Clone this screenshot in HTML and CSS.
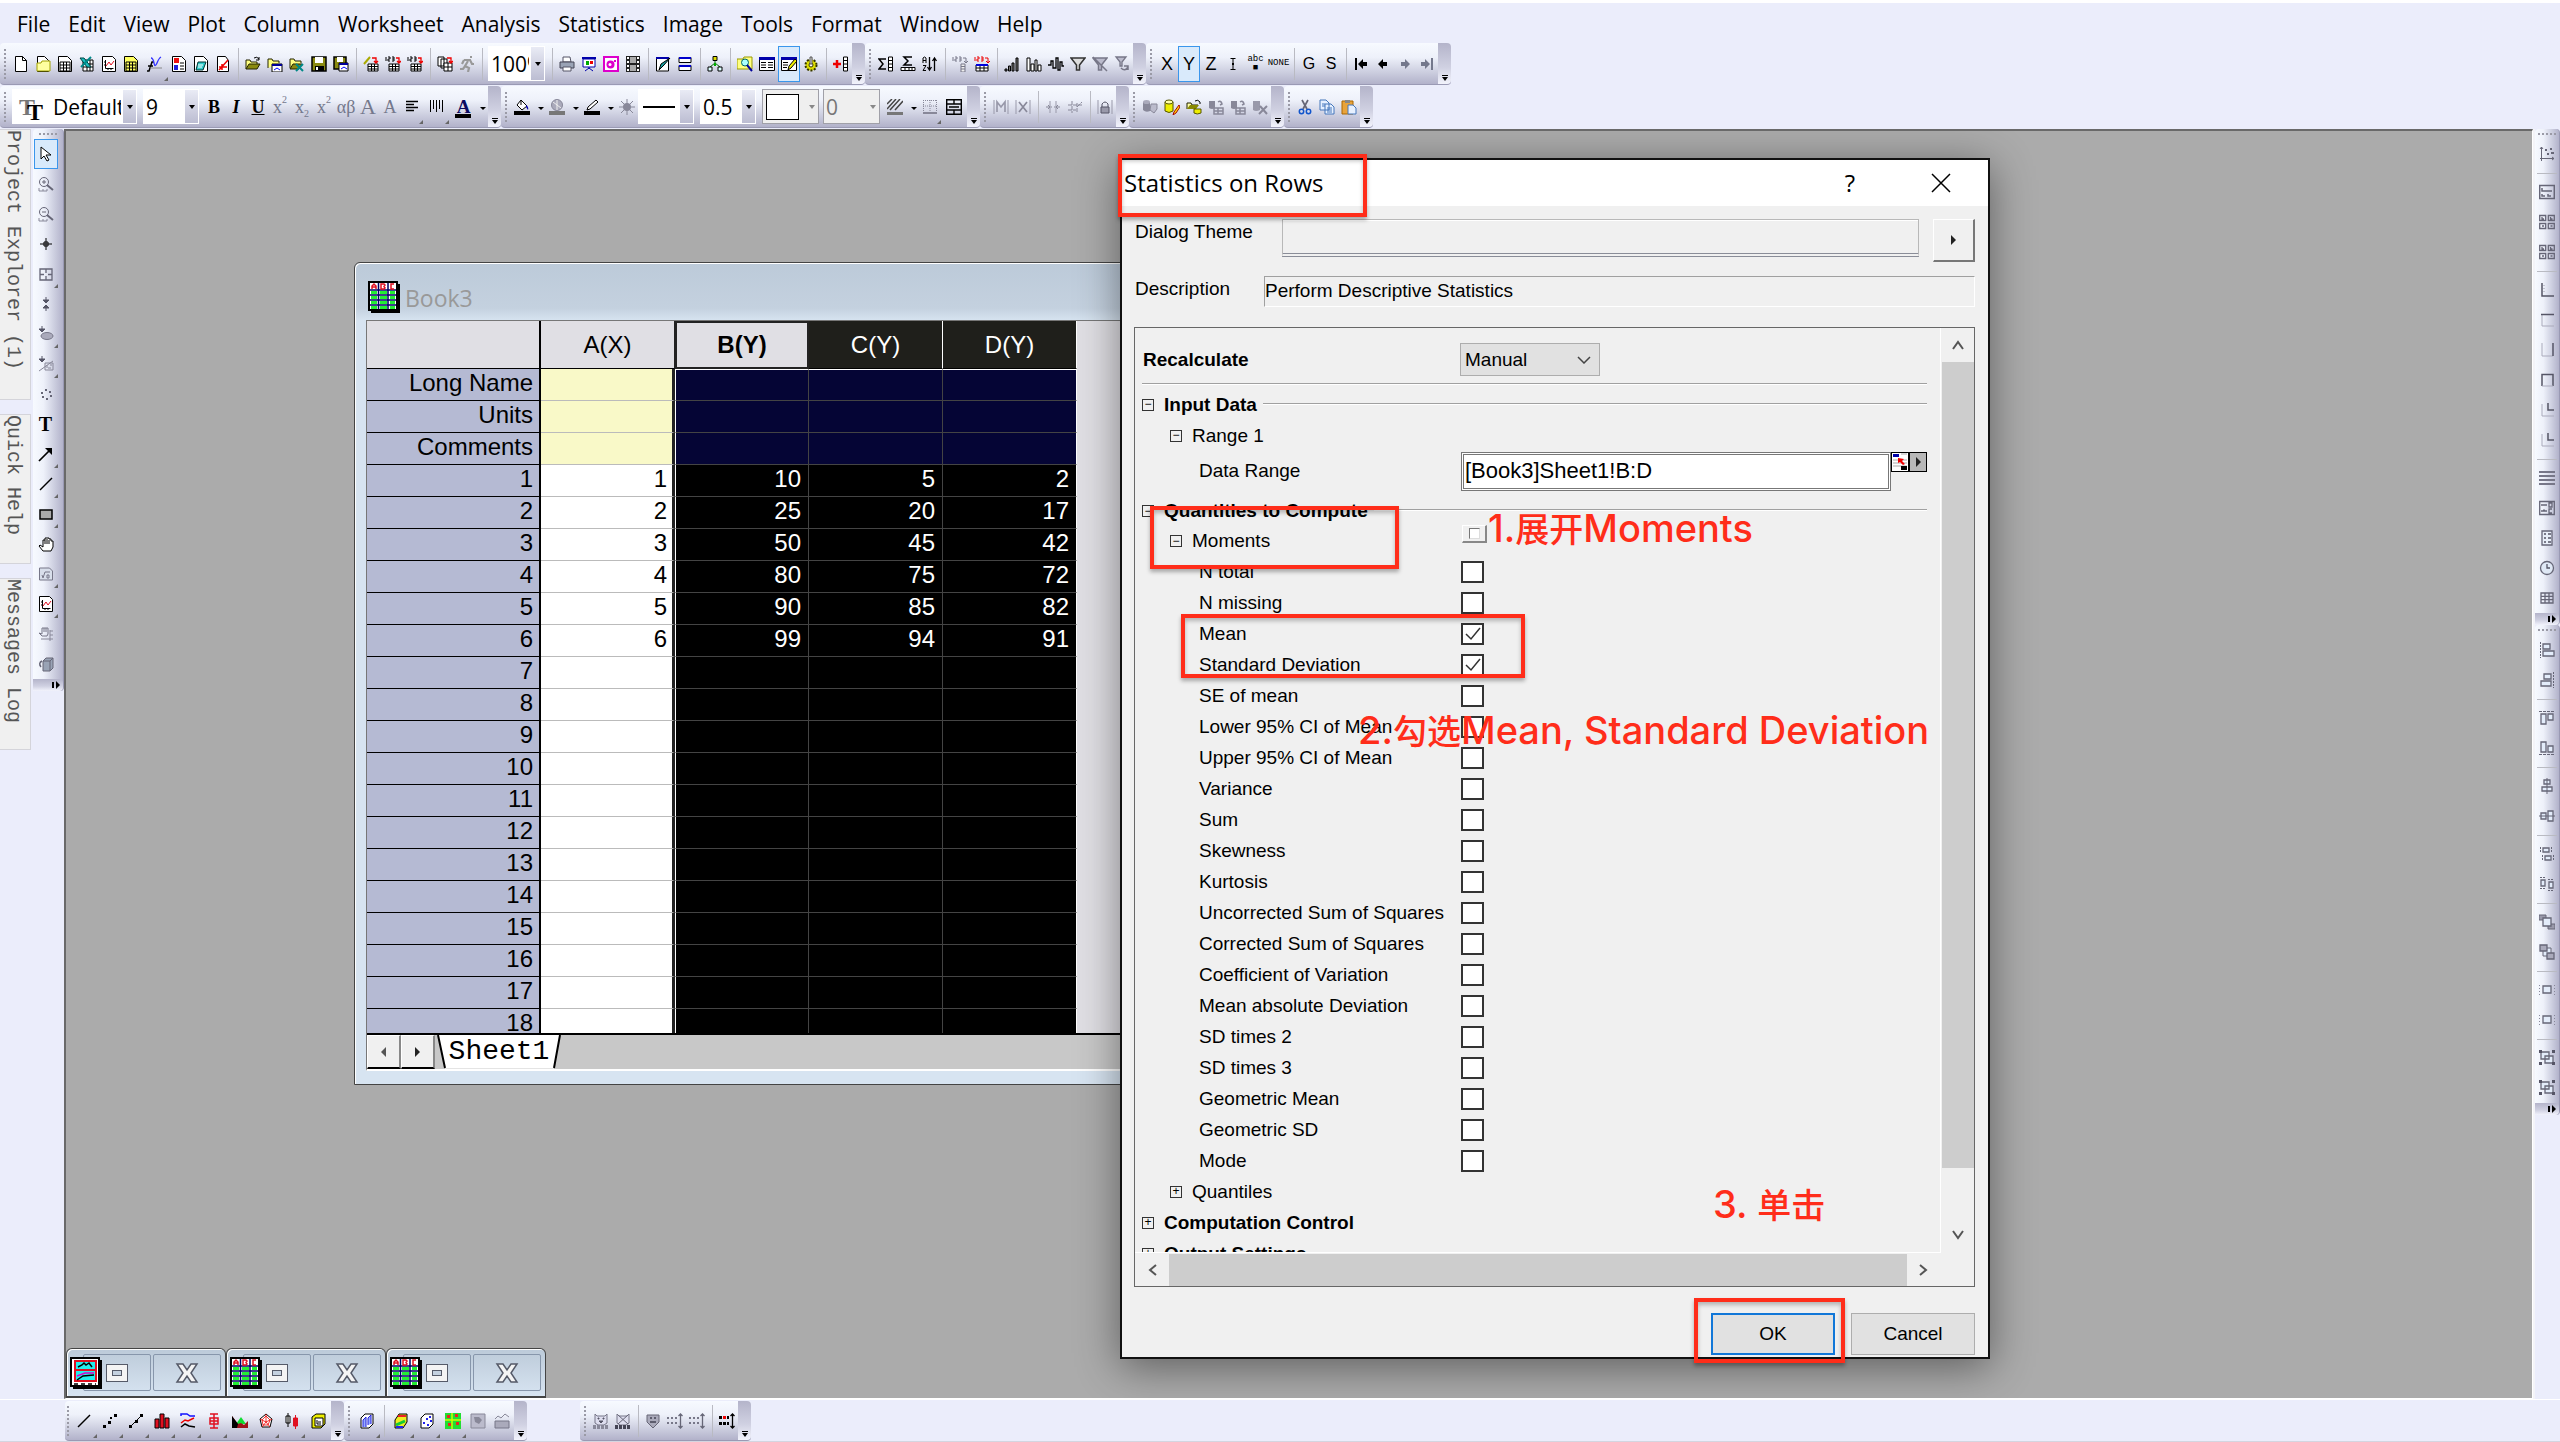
FILE: index.html
```html
<!DOCTYPE html>
<html lang="en">
<head>
<meta charset="utf-8">
<title>Origin - Statistics on Rows</title>
<link rel="stylesheet" href="styles.css">
</head>
<body>
<svg class="sprite" aria-hidden="true">
<defs>
<symbol id="doc" viewBox="0 0 16 16"><path d="M2.500 .5h7l4 4v11h-11z" fill="#fff" stroke="#000"/><path d="M9.500 .5v4h4" fill="none" stroke="#000"/></symbol>
<symbol id="docy" viewBox="0 0 16 16"><path d="M2.500 .5h7l4 4v11h-11z" fill="#fff" stroke="#000"/><path d="M2 7h4l1-2h8v10H2z" fill="#ffffa0" stroke="#a0a000"/></symbol>
<symbol id="docg" viewBox="0 0 16 16"><path d="M1.500 .5h9l4 4v11h-13z" fill="#fff" stroke="#000"/><path d="M3 6h10v9H3zM3 9h10M3 12h10M6.500 6v9M9.500 6v9" fill="none" stroke="#000"/></symbol>
<symbol id="docgy" viewBox="0 0 16 16"><path d="M1.500 .5h9l4 4v11h-13z" fill="#ffff60" stroke="#000"/><path d="M3 6h10v9H3zM3 9h10M3 12h10M6.500 6v9M9.500 6v9" fill="none" stroke="#000"/></symbol>
<symbol id="docx" viewBox="0 0 16 16"><path d="M4 4h10v11H4zM4 8h10M4 11h10M8 4v11M11 4v11" fill="#fff" stroke="#000"/><path d="M1 2h4l7 9H8z" fill="#19c0c0" stroke="#044"/><path d="M12 1L2 11" stroke="#088" stroke-width="2"/></symbol>
<symbol id="docc" viewBox="0 0 16 16"><path d="M1.500 .5h10l3 3v12h-13z" fill="#fff" stroke="#000"/><path d="M4.500 4v8.500h8M3 6h1M3 9h1M7 13v1M10 13v1" fill="none" stroke="#000"/><path d="M5 10l3-4 2 3 3-4" fill="none" stroke="#e01020"/></symbol>
<symbol id="fn" viewBox="0 0 16 16"><path d="M0 15h2l3-9h2M1 10h5" fill="none" stroke="#000" stroke-width="1.500"/><path d="M4 2q2 0 3 5t3 0 4-6" fill="none" stroke="#33f" stroke-width="1.300"/><path d="M3 12h12" stroke="#888"/></symbol>
<symbol id="doci" viewBox="0 0 16 16"><path d="M1.500 .5h9l4 4v11h-13z" fill="#fff" stroke="#000"/><path d="M3 2h5v5H3z" fill="#e11"/><path d="M3 9h4v5H3z" fill="#22d"/><path d="M9 7h4M9 10h4M9 13h4" stroke="#000"/></symbol>
<symbol id="docn" viewBox="0 0 16 16"><path d="M1.500 .5h9l4 4v11h-13z" fill="#fff" stroke="#000"/><path d="M5 6h8l-3 8H3z" fill="#3cc" stroke="#033"/><path d="M5 9h5M5 11h4" stroke="#fff"/></symbol>
<symbol id="docr" viewBox="0 0 16 16"><path d="M2.500 .5h8l3 4v11h-11z" fill="#fff" stroke="#000"/><path d="M4 14l9-10M7 8v6M4 11h8" stroke="#e00" stroke-width="1.500"/></symbol>
<symbol id="open" viewBox="0 0 16 16"><path d="M1 13V4h4l1 2h6v2" fill="#ffff80" stroke="#220"/><path d="M1 13l3-5h11l-3 5z" fill="#8a8a10" stroke="#220"/><path d="M9 2q3-2 5 1m0-2v3h-3" fill="none" stroke="#000"/></symbol>
<symbol id="openg" viewBox="0 0 16 16"><path d="M1 12V3h4l1 2h6v2" fill="#ffff80" stroke="#220"/><path d="M5 8h10v8H5z" fill="#fff" stroke="#000"/><path d="M5 8h10v2H5z" fill="#009"/><path d="M7 14l3-2 3 2" stroke="#00f" fill="none"/></symbol>
<symbol id="openx" viewBox="0 0 16 16"><path d="M1 12V3h4l1 2h6v2" fill="#ffff80" stroke="#220"/><path d="M1 13l3-5h9l-3 5z" fill="#8a8a10" stroke="#220"/><path d="M7 8l7 7M14 8l-7 7" stroke="#088" stroke-width="2"/></symbol>
<symbol id="save" viewBox="0 0 16 16"><path d="M1 1h14v14H1z" fill="#8a8a10" stroke="#000" stroke-width="1.500"/><path d="M4 1h8v6H4z" fill="#fff"/><path d="M4 10h9v5H4z" fill="#000"/><path d="M5 11h2v3H5z" fill="#fff"/></symbol>
<symbol id="saveg" viewBox="0 0 16 16"><path d="M1 1h12v12H1z" fill="#8a8a10" stroke="#000" stroke-width="1.500"/><path d="M4 1h6v5H4z" fill="#fff"/><path d="M6 7h9v8H6z" fill="#fff" stroke="#000"/><path d="M6 7h9v2H6z" fill="#009"/><path d="M8 13l3-2 3 2" stroke="#00f" fill="none"/></symbol>
<symbol id="imp" viewBox="0 0 16 16"><path d="M5 8h10v7H5zM5 10.500h10M5 13h10M8.500 8v7M11.500 8v7" fill="#fff" stroke="#000"/><path d="M1 8L7 1" stroke="#aa0" stroke-width="2"/><path d="M9 2h4v4m-2-1l2 2 2-2" fill="none" stroke="#e00" stroke-width="1.300"/></symbol>
<symbol id="imp1" viewBox="0 0 16 16"><path d="M4 8h10v7H4zM4 10.500h10M4 13h10M7.500 8v7M10.500 8v7" fill="#fff" stroke="#000"/><path d="M1 1v4M3 1h2v2H3v2h2M7 1h2v4H7M7 3h2" fill="none" stroke="#000"/><path d="M11 2h3v4m-2-1l2 2 2-2" fill="none" stroke="#e00" stroke-width="1.300"/></symbol>
<symbol id="dup" viewBox="0 0 16 16"><path d="M1 1h6v9H1zM4 3h6v9H4z" fill="#fff" stroke="#000"/><path d="M7 7h8v8H7zM7 11h8M11 7v8" fill="#fff" stroke="#000"/><path d="M10 2h4v4m-2-1l2 2 2-2" fill="none" stroke="#e00" stroke-width="1.300"/></symbol>
<symbol id="run" viewBox="0 0 16 16"><path d="M11 1h2M5 4h6l2 4h2M9 5l-3 5 4 2-1 4M7 9l-3 4H1M5 4L3 8" fill="none" stroke="#999" stroke-width="2.200"/></symbol>
<symbol id="print" viewBox="0 0 16 16"><path d="M4 1h7l1 5H4z" fill="#fff" stroke="#556"/><path d="M1 6h14v6H1z" fill="#9aa3b5" stroke="#445"/><path d="M4 11h8v4H4z" fill="#fff" stroke="#556"/></symbol>
<symbol id="pres" viewBox="0 0 16 16"><path d="M1 1h14v2H1z" fill="#00a"/><path d="M2 3h12v8H2z" fill="#fff" stroke="#00a"/><path d="M5 5h3v4H5z" fill="#0a0"/><path d="M9 5h3v3H9z" fill="#e00"/><path d="M8 11v2m-4 2l4-3 4 3" stroke="#00a" fill="none"/></symbol>
<symbol id="cam" viewBox="0 0 16 16"><path d="M1 1h14v14H1z" fill="#fff" stroke="#d0c" stroke-width="2"/><circle cx="7.500" cy="8.500" r="4" fill="#d0c"/><circle cx="7" cy="8.500" r="1.500" fill="#fff"/><path d="M11 4h2v2h-2z" fill="#d0c"/></symbol>
<symbol id="film" viewBox="0 0 16 16"><path d="M1 0h14v16H1z" fill="#222"/><path d="M5 1h6v6H5zM5 9h6v6H5z" fill="#aaa"/><path d="M2 1h2v2H2zM2 5h2v2H2zM2 9h2v2H2zM2 13h2v2H2zM12 1h2v2h-2zM12 5h2v2h-2zM12 9h2v2h-2zM12 13h2v2h-2z" fill="#fff"/></symbol>
<symbol id="brush" viewBox="0 0 16 16"><path d="M1.500 2h12v13h-12z" fill="#fff" stroke="#000"/><path d="M1 1h13v2H1z" fill="#00a"/><path d="M15 2L9 9l-5 5 2-6z" fill="#19a0a0" stroke="#000"/></symbol>
<symbol id="split" viewBox="0 0 16 16"><path d="M2 1.500h12v5H2zM2 9.500h12v5H2z" fill="#fff" stroke="#000"/><path d="M2 1h12v2H2zM2 9h12v2H2z" fill="#00c"/></symbol>
<symbol id="tree" viewBox="0 0 16 16"><path d="M8 4v3M8 7l-5 4M8 7l5 4" stroke="#070"/><path d="M6 .5h4v4H6z" fill="#dd0" stroke="#000"/><path d="M1 11h4v4H1zM11 11h4v4h-4z" fill="#dff" stroke="#000"/><path d="M7 7h2v3H7z" fill="#0a0"/></symbol>
<symbol id="find" viewBox="0 0 16 16"><path d="M0 3h6l1-2h8v12H0z" fill="#ffff80" stroke="#990"/><circle cx="8" cy="6.500" r="3.500" fill="#aff" stroke="#066"/><path d="M10 9l5 6" stroke="#009" stroke-width="2"/></symbol>
<symbol id="list" viewBox="0 0 16 16"><path d="M.5 1.500h15v13H.5z" fill="#fff" stroke="#000"/><path d="M0 1h16v3H0z" fill="#00a"/><path d="M2 6.500h5M9 6.500h5M2 9h5M9 9h5M2 11.500h5M9 11.500h5" stroke="#000"/></symbol>
<symbol id="editl" viewBox="0 0 16 16"><path d="M.5 1.500h15v13H.5z" fill="#fff" stroke="#000"/><path d="M0 1h16v3H0z" fill="#00a"/><path d="M2 6.500h5M2 9h5M2 11.500h4" stroke="#000"/><path d="M14 3l-6 7-1 4 3-2 6-7z" fill="#ee0" stroke="#000"/></symbol>
<symbol id="gear" viewBox="0 0 16 16"><circle cx="8" cy="9" r="5.500" fill="#dd0" stroke="#330" stroke-width="2" stroke-dasharray="2 1.500"/><circle cx="8" cy="9" r="2" fill="#fff" stroke="#330"/><path d="M7 1h2v7H7z" fill="#ddd" stroke="#555"/></symbol>
<symbol id="addcol" viewBox="0 0 16 16"><path d="M0 8h8M4 4v8" stroke="#e00" stroke-width="2.500"/><path d="M10.500 1h4v14h-4zM10 4.500h4M10 8h4M10 11.500h4" fill="#fff" stroke="#000"/></symbol>
<symbol id="sumc" viewBox="0 0 16 16"><path d="M8 3H1l4 5-4 5h7" fill="none" stroke="currentColor" stroke-width="1.500"/><path d="M10.500 1h4v14h-4zM10 4.500h4M10 8h4M10 11.500h4" fill="#fff" stroke="currentColor"/></symbol>
<symbol id="sumr" viewBox="0 0 16 16"><path d="M12 1H4l4 4-4 4h8" fill="none" stroke="currentColor" stroke-width="1.500"/><path d="M1 11.500h14v3H1zM5 11v4M9 11v4M12 11v4" fill="#fff" stroke="currentColor"/></symbol>
<symbol id="sort" viewBox="0 0 16 16"><path d="M1 7V2l1.500-1L4 2v5M1 4.500h3M1 9.500h3l-3 5h3" fill="none" stroke="currentColor"/><path d="M7.500 1v13m-2-3l2 3 2-3M12.500 15V2m-2 3l2-3 2 3" fill="none" stroke="currentColor" stroke-width="1.300"/></symbol>
<symbol id="n123" viewBox="0 0 16 16"><path d="M1 1v4M3 1h2v2H3v2h2M7 1h2v4H7M7 3h2M11 2h3v4m-2-1l2 2 2-2" fill="none" stroke="#778"/><path d="M9 8h4v8H9zM9 10.500h4M9 13h4" fill="#eee" stroke="#778"/></symbol>
<symbol id="t123" viewBox="0 0 16 16"><path d="M1 1v4M3 1h2v2H3v2h2M7 1h2v4H7M7 3h2M11 2h3v4m-2-1l2 2 2-2" fill="none" stroke="#e00"/><path d="M2 9h12v6H2zM2 12h12M6 9v6M10 9v6" fill="#fff" stroke="#000"/><path d="M2 8h12v2H2z" fill="#00d"/></symbol>
<symbol id="b1" viewBox="0 0 16 16"><path d="M1 13h2v2H1zM4.500 10h2v5h-2zM8 7h2v8H8zM12 2h2v13h-2z" fill="#777" stroke="currentColor"/></symbol>
<symbol id="b2" viewBox="0 0 16 16"><path d="M1 2h3v13H1zM5 8h3v7H5zM9 4h2v11H9zM12 9h3v6h-3z" fill="#fff" stroke="currentColor"/></symbol>
<symbol id="b3" viewBox="0 0 16 16"><path d="M0 9h3v-4h2v7h3V2h2v12h2V6h2v4h2" fill="none" stroke="currentColor" stroke-width="1.300"/></symbol>
<symbol id="filt" viewBox="0 0 16 16"><path d="M1 2h14L9.500 9v5h-3V9z" fill="#ddd" stroke="#333" stroke-width="1.500"/></symbol>
<symbol id="filtx" viewBox="0 0 16 16"><path d="M1 2h14L9.500 9v5h-3V9zM1 1l14 14" fill="#bbc" stroke="#778" stroke-width="1.500"/></symbol>
<symbol id="filtr" viewBox="0 0 16 16"><path d="M2 1h10L8 6v4H6V6z" fill="#bbc" stroke="#778" stroke-width="1.300"/><path d="M7 12q4 4 7-1m0 3v-4h-4" fill="none" stroke="#778" stroke-width="1.500"/></symbol>
<symbol id="ibeam" viewBox="0 0 16 16"><path d="M5.500 2.500h5M8 2v11M5.500 13.500h5" stroke="#000"/><path d="M7 7h2v2H7z"/></symbol>
<symbol id="first" viewBox="0 0 16 16"><path d="M2 2h2v12H2zM5 8l5-5v3h4v4h-4v3z" fill="currentColor"/></symbol>
<symbol id="prev" viewBox="0 0 16 16"><path d="M3 8l5-5v3h4v4H8v3z" fill="currentColor"/></symbol>
<symbol id="next" viewBox="0 0 16 16"><path d="M13 8L8 3v3H4v4h4v3z" fill="currentColor"/></symbol>
<symbol id="last" viewBox="0 0 16 16"><path d="M12 2h2v12h-2zM11 8L6 3v3H2v4h4v3z" fill="currentColor"/></symbol>
<symbol id="al" viewBox="0 0 16 16"><path d="M2 2.500h12M2 5.500h8M2 8.500h12M2 11.500h8" stroke="#000" stroke-width="1.300"/></symbol>
<symbol id="vl" viewBox="0 0 16 16"><path d="M2.500 1v12M5.500 1v9M8.500 1v12M11.500 1v9M14.500 1v12" stroke="#000"/></symbol>
<symbol id="bucket" viewBox="0 0 16 16"><path d="M7 1l6 6-5 4-5-5zM7 1v5" fill="#fff" stroke="#000"/><path d="M12 6q3 2 2 5l-2-3z" fill="#00a"/><path d="M0 12h16v4H0z" fill="#000"/></symbol>
<symbol id="pal" viewBox="0 0 16 16"><circle cx="8" cy="6" r="5.500" fill="#aab" stroke="#889"/><path d="M4 3l8 6M8 1v10" stroke="#eee"/><path d="M0 12h16v4H0z" fill="#777"/></symbol>
<symbol id="pen" viewBox="0 0 16 16"><path d="M12 1l2 2-8 7-3 1 1-3z" fill="#fff" stroke="#000"/><path d="M0 12h16v4H0z" fill="#000"/></symbol>
<symbol id="bulb" viewBox="0 0 16 16"><circle cx="8" cy="8" r="4" fill="#889"/><path d="M8 0v16M0 8h16M2 2l12 12M14 2L2 14" stroke="#889"/></symbol>
<symbol id="hatch" viewBox="0 0 16 16"><path d="M0 10L9 0M3 11L13 0M8 11l8-9M0 5l5-5" stroke="#444" stroke-width="1.500"/><path d="M0 13h16v3H0z" fill="#777"/></symbol>
<symbol id="dots" viewBox="0 0 16 16"><path d="M1.500 1v11M8 1v11M14.500 1v11M1 1.500h14M1 7h14" stroke="#889" stroke-dasharray="1 1"/><path d="M1 14h14" stroke="#889" stroke-width="2"/></symbol>
<symbol id="cellb" viewBox="0 0 16 16"><path d="M.7 .7h14.600v14.600H.7zM.7 5h14.600M.7 11h14.600M8 1v4M8 11v4M3 8h10" fill="none" stroke="#000" stroke-width="1.400"/></symbol>
<symbol id="mm" viewBox="0 0 16 16"><path d="M1 1v14M15 1v14" stroke="#99a"/><path d="M4 13V3l4 5 4-5v10" fill="none" stroke="#99a" stroke-width="1.700"/></symbol>
<symbol id="mx" viewBox="0 0 16 16"><path d="M1 1v14M15 1v14" stroke="#99a"/><path d="M4 3l8 10M12 3L4 13" fill="none" stroke="#889" stroke-width="1.700"/></symbol>
<symbol id="pm" viewBox="0 0 16 16"><path d="M5 2v12M11 2v12" stroke="#99a" stroke-dasharray="5 2"/><path d="M1 8h6M9 8h6M3 6l2 2-2 2M13 6l-2 2 2 2" fill="none" stroke="#889"/></symbol>
<symbol id="pm3" viewBox="0 0 16 16"><path d="M5 2v12M10 4v10M1 6h14M1 11h8M10 8l5-5" stroke="#889" stroke-dasharray="4 1"/></symbol>
<symbol id="lock" viewBox="0 0 16 16"><path d="M1 1v14M15 1v14" stroke="#99a"/><path d="M5 8V5q3-4 6 0v3" fill="none" stroke="#556"/><path d="M4 8h8v6H4z" fill="#99a" stroke="#556"/></symbol>
<symbol id="db" viewBox="0 0 16 16"><path d="M1 3v8q3 3 7 1V3z" fill="#889"/><ellipse cx="4.500" cy="3" rx="3.500" ry="2" fill="#aab"/><path d="M9 5h6v5l-3 4-4-3z" fill="#bbc" stroke="#889"/></symbol>
<symbol id="dby" viewBox="0 0 16 16"><path d="M1 3v9q4 3 8 0V3z" fill="#ee0" stroke="#550"/><ellipse cx="5" cy="3" rx="4" ry="2" fill="#ffa" stroke="#550"/><path d="M15 6l-5 7-1 3 3-2 4-6z" fill="#fd0" stroke="#a00"/></symbol>
<symbol id="dbo" viewBox="0 0 16 16"><path d="M1 10V4h4l1 2h6" fill="#ffa" stroke="#220"/><path d="M1 10l3-4h9l-3 4z" fill="#880"/><path d="M8 10v4q3 2 7 0v-4z" fill="#ee0" stroke="#550"/><path d="M9 2q3-2 5 1v2" fill="none" stroke="#000"/></symbol>
<symbol id="dbg" viewBox="0 0 16 16"><path d="M1 2v7q3 2 6 0V2z" fill="#889"/><path d="M10 3q3-2 4 2l-2 1M6 9h9v6H6zM6 12h9M10 9v6" fill="none" stroke="#889" stroke-width="1.500"/></symbol>
<symbol id="dbx" viewBox="0 0 16 16"><path d="M1 2v9q3 2 7 0V2z" fill="#99a"/><path d="M8 7l7 8M15 7l-8 8" stroke="#889" stroke-width="2"/></symbol>
<symbol id="cut" viewBox="0 0 16 16"><path d="M5 1l5 9M11 1L6 10" stroke="#667" stroke-width="1.700"/><circle cx="4.500" cy="12.500" r="2.200" fill="none" stroke="#15c" stroke-width="1.500"/><circle cx="11.500" cy="12.500" r="2.200" fill="none" stroke="#15c" stroke-width="1.500"/></symbol>
<symbol id="copy" viewBox="0 0 16 16"><path d="M1 1h6l3 3v7H1zM6 5h6l3 3v7H6z" fill="#e6f0ff" stroke="#47b"/><path d="M8 9h5M8 11h5M8 13h5M3 5h3M3 7h3" stroke="#47b"/></symbol>
<symbol id="paste" viewBox="0 0 16 16"><path d="M1 2h11v13H1z" fill="#e8a33a" stroke="#a60"/><path d="M4 1h5v3H4z" fill="#888"/><path d="M7 6h5l3 3v6H7z" fill="#e6f0ff" stroke="#47b"/></symbol>
<symbol id="cursor" viewBox="0 0 16 16"><path d="M3 1v12l3-3 3 5 2-1-3-5h5z" fill="#fff" stroke="#000"/></symbol>
<symbol id="zin" viewBox="0 0 16 16"><circle cx="6" cy="6" r="4.500" fill="none" stroke="#667"/><path d="M4 6h4M6 4v4" stroke="#667"/><path d="M9 9l6 5" stroke="#667" stroke-width="2"/><path d="M1 12v3h8v-2M5 13v2" fill="none" stroke="#889"/></symbol>
<symbol id="zout" viewBox="0 0 16 16"><circle cx="6" cy="6" r="4.500" fill="none" stroke="#667"/><path d="M4 6h4" stroke="#667"/><path d="M9 9l6 5" stroke="#667" stroke-width="2"/><path d="M1 12v3h8v-2M5 13v2" fill="none" stroke="#889"/></symbol>
<symbol id="cross" viewBox="0 0 16 16"><path d="M8 2v12M2 8h12M6 6h4v4H6z" fill="none" stroke="#000"/></symbol>
<symbol id="target" viewBox="0 0 16 16"><path d="M2 3h12v11H2zM8 3v4M8 10v4M2 8.500h4M10 8.500h4" fill="none" stroke="#667" stroke-width="1.300"/></symbol>
<symbol id="arrs" viewBox="0 0 16 16"><path d="M8 1v3M5 4h6l-3 3zM8 15v-3M5 12h6L8 9z" fill="#556" stroke="#556"/></symbol>
<symbol id="oval" viewBox="0 0 16 16"><ellipse cx="9" cy="10" rx="6" ry="3.500" fill="#aab" stroke="#778"/><path d="M4 0v3M1 3h6L4 6z" fill="#556" stroke="#556"/></symbol>
<symbol id="maskg" viewBox="0 0 16 16"><path d="M1 15L15 5M7 7h8v7H7zM9 9v3M12 9h2M10 12h3" fill="none" stroke="#889"/><path d="M4 0v3M1 3h6L4 6z" fill="#556" stroke="#556"/></symbol>
<symbol id="dotc" viewBox="0 0 16 16"><path d="M7 3h2v2H7zM3 6h2v2H3zM11 5h2v2h-2zM4 10h2v2H4zM8 12h2v2H8zM12 9h2v2h-2z" fill="#667"/></symbol>
<symbol id="arrow" viewBox="0 0 16 16"><path d="M1 15L12 4" stroke="#000" stroke-width="1.700"/><path d="M7 2h7v7z"/></symbol>
<symbol id="line" viewBox="0 0 16 16"><path d="M2 14L14 2" stroke="#000" stroke-width="1.500"/></symbol>
<symbol id="rect" viewBox="0 0 16 16"><path d="M2 4h12v9H2z" fill="#aaa" stroke="#000" stroke-width="1.500"/></symbol>
<symbol id="hand" viewBox="0 0 16 16"><path d="M5 15l-4-5 1-1 3 2V4h2V2h2v0h2v1h2v2h2v6l-2 4z" fill="#fff" stroke="#000"/><path d="M7 4v4M9 3v5M11 4v4" stroke="#000"/></symbol>
<symbol id="sq" viewBox="0 0 16 16"><path d="M1.500 2h10l3 3v9h-13z" fill="#d8deea" stroke="#778"/><path d="M4 9l1 3 2-6h5M9 9h2v3H9z" fill="none" stroke="#778"/></symbol>
<symbol id="handg" viewBox="0 0 16 16"><path d="M4 10L1 7l3 1V2h6v6l-1 2zM6 2v4M8 2v4" fill="none" stroke="#778"/><path d="M3 13h12M12 4v11M12 5h3M12 9h3" fill="none" stroke="#889"/></symbol>
<symbol id="cube" viewBox="0 0 16 16"><path d="M5 5l3-3h7v10l-3 3H5zM5 5h7v10M12 5l3-3" fill="#99a3b5" stroke="#667"/><path d="M4 5Q0 7 3 11" fill="none" stroke="#667" stroke-width="1.500"/></symbol>
<symbol id="scat" viewBox="0 0 16 16"><path d="M2.500 1v14M1 12.500h14M1 3l1.500-2L4 3M13 11l2 1.500-2 1.500" fill="none" stroke="#667"/><path d="M6 3h2v2H6zM11 2h2v2h-2zM8 7h2v2H8zM12 6h3v2h-3z" fill="#667"/></symbol>
<symbol id="lay1" viewBox="0 0 16 16"><path d="M.7 1.500h14.600v13H.7zM3 4v3h10M3 10v2h3M9 10v2h3" fill="none" stroke="#667" stroke-width="1.500"/></symbol>
<symbol id="lay4" viewBox="0 0 16 16"><path d="M.7 1.500h6v5h-6zM9.300 1.500h6v5h-6zM.7 9.500h6v5h-6zM9.300 9.500h6v5h-6zM3 3v2h2M11.500 3v2h2M3 12h2M11.500 12h2" fill="none" stroke="#667" stroke-width="1.300"/></symbol>
<symbol id="ax1" viewBox="0 0 16 16"><path d="M3 1v13h12" fill="none" stroke="#556" stroke-width="1.500"/><path d="M5 3v9" stroke="#99a" stroke-dasharray="1 2"/></symbol>
<symbol id="ax2" viewBox="0 0 16 16"><path d="M3 14V3M15 14H3" fill="none" stroke="#aab"/><path d="M2 2.500h13" stroke="#556" stroke-width="1.500"/></symbol>
<symbol id="ax3" viewBox="0 0 16 16"><path d="M3 1v13h11" fill="none" stroke="#aab"/><path d="M14 1v13" stroke="#556" stroke-width="1.500"/></symbol>
<symbol id="ax4" viewBox="0 0 16 16"><path d="M3 14V2.500h11V14" fill="none" stroke="#556" stroke-width="1.500"/><path d="M3 14h11" stroke="#aab"/></symbol>
<symbol id="ax5" viewBox="0 0 16 16"><path d="M3 2v12h12" fill="none" stroke="#aab"/><path d="M9 1v7h6" fill="none" stroke="#556" stroke-width="1.500"/></symbol>
<symbol id="lines" viewBox="0 0 16 16"><path d="M0 2h16M0 6h16M0 10h16M0 14h16" stroke="#778" stroke-width="2"/></symbol>
<symbol id="leg" viewBox="0 0 16 16"><path d="M.7 1.500h14.600v13H.7zM2 5h6M2 11h6M4 11l1-1 1 1M10 3h3v4h-3zM13 9h-3v4h3" fill="none" stroke="#667" stroke-width="1.300"/></symbol>
<symbol id="leg2" viewBox="0 0 16 16"><path d="M3 1h10v14H3z" fill="#e8eef8" stroke="#667" stroke-width="1.300"/><path d="M5 4h2M9 4h3M5 8h2M9 8h3M5 12h2M9 12h3" stroke="#556" stroke-width="1.500"/></symbol>
<symbol id="clock" viewBox="0 0 16 16"><circle cx="8" cy="8" r="6.500" fill="#dfe8f5" stroke="#667" stroke-width="1.300"/><path d="M8 4v4h3" fill="none" stroke="#556" stroke-width="1.300"/></symbol>
<symbol id="grid" viewBox="0 0 16 16"><path d="M2 3h12v10H2zM2 6.300h12M2 9.700h12M6 3v10M10 3v10" fill="none" stroke="#667" stroke-width="1.300"/></symbol>
<symbol id="all" viewBox="0 0 16 16"><path d="M1.500 0v16" stroke="#667" stroke-dasharray="2 1"/><path d="M4 2h7v5H4zM4 9h11v5H4z" fill="#e3ecfa" stroke="#667" stroke-width="1.300"/></symbol>
<symbol id="alr" viewBox="0 0 16 16"><path d="M14.500 0v16" stroke="#667" stroke-dasharray="2 1"/><path d="M5 2h7v5H5zM2 9h10v5H2z" fill="#e3ecfa" stroke="#667" stroke-width="1.300"/></symbol>
<symbol id="alt" viewBox="0 0 16 16"><path d="M0 1.500h16" stroke="#667" stroke-dasharray="3 1"/><path d="M2 4h5v10H2zM9 4h5v6H9z" fill="#e3ecfa" stroke="#667" stroke-width="1.300"/></symbol>
<symbol id="alb" viewBox="0 0 16 16"><path d="M0 14.500h16" stroke="#667" stroke-dasharray="3 1"/><path d="M2 2h5v10H2zM9 6h5v6H9z" fill="#e3ecfa" stroke="#667" stroke-width="1.300"/></symbol>
<symbol id="alc" viewBox="0 0 16 16"><path d="M5 2h6v4H5zM3 9h10v4H3z" fill="#e3ecfa" stroke="#667" stroke-width="1.300"/><path d="M8 0v16" stroke="#667"/></symbol>
<symbol id="alm" viewBox="0 0 16 16"><path d="M2 5h5v6H2zM9 3h5v10H9z" fill="#e3ecfa" stroke="#667" stroke-width="1.300"/><path d="M0 8h16" stroke="#667"/></symbol>
<symbol id="dsh" viewBox="0 0 16 16"><path d="M1.500 1v6M12.500 1v6M3.500 9v6M14.500 9v6" stroke="#667" stroke-dasharray="2 1"/><path d="M4 2h6v4H4zM6 10h6v4H6z" fill="#e3ecfa" stroke="#667" stroke-width="1.300"/></symbol>
<symbol id="dsv" viewBox="0 0 16 16"><path d="M1 1.500h6M1 12.500h6M9 3.500h6M9 14.500h6" stroke="#667" stroke-dasharray="2 1"/><path d="M2 4h4v6H2zM10 6h4v6h-4z" fill="#e3ecfa" stroke="#667" stroke-width="1.300"/></symbol>
<symbol id="front" viewBox="0 0 16 16"><path d="M0 1h7v5H0zM9 10h7v5H9z" fill="#99a" stroke="#667"/><path d="M4 4h8v8H4z" fill="#e3ecfa" stroke="#667" stroke-width="1.300"/></symbol>
<symbol id="back" viewBox="0 0 16 16"><path d="M4 4h8v8H4z" fill="#e3ecfa" stroke="#667"/><path d="M1 1h7v6H1zM8 9h7v6H8z" fill="#aab" stroke="#667" stroke-width="1.300"/></symbol>
<symbol id="fade" viewBox="0 0 16 16"><path d="M4 4h8v7H4z" fill="#e3ecfa" stroke="#667" stroke-width="1.300"/><path d="M.5 3v10M15.500 3v10" stroke="#889" stroke-dasharray="1 2"/></symbol>
<symbol id="grp" viewBox="0 0 16 16"><path d="M2 2h8v7H2zM6 6h8v7H6z" fill="#e3ecfa" stroke="#667" stroke-width="1.300"/><path d="M0 0h3v3H0zM13 0h3v3h-3zM0 12h3v3H0zM13 12h3v3h-3z" fill="#556"/></symbol>
<symbol id="pd" viewBox="0 0 16 16"><path d="M1 12h3v3H1zM6 8h3v3H6zM8 4h2v2H8zM12 1h3v3h-3z"/></symbol>
<symbol id="pl" viewBox="0 0 16 16"><path d="M2 14L14 2" stroke="#000"/><path d="M1 12h3v3H1zM7 7h3v3H7zM12 1h3v3h-3z"/></symbol>
<symbol id="pb" viewBox="0 0 16 16"><path d="M1 6h4v9H1zM6 1h4v14H6zM11 5h4v10h-4z" fill="#e01020" stroke="#000"/></symbol>
<symbol id="pm2" viewBox="0 0 16 16"><path d="M1 3V1h6l3 2h5" stroke="#11f" fill="none" stroke-width="1.500"/><path d="M1 10l4-3 3 1 6-3" stroke="#e00" fill="none" stroke-width="1.500"/><path d="M1 14l4-3 4 2 6 1" stroke="#000" fill="none" stroke-width="1.500"/></symbol>
<symbol id="box" viewBox="0 0 16 16"><path d="M4 1h8M8 1v14M4 15h8M4 5h8v6H4zM4 8h8" fill="none" stroke="#e01020" stroke-width="1.500"/></symbol>
<symbol id="area" viewBox="0 0 16 16"><path d="M4 11l5-7 5 7z" fill="#1d3"/><path d="M0 3l6 8 3-1 3 2 4-4v7H0z" fill="#a01018"/><path d="M0 3l6 8-1 4H0z" fill="#000"/></symbol>
<symbol id="radar" viewBox="0 0 16 16"><path d="M8 1l6 5-2 8H4L2 6z" fill="#fff" stroke="#000"/><path d="M8 3l4 4-2 5H5L4 7zM8 1v8l6-3M8 9L2 6M8 9l-4 5M8 9l4 5" fill="none" stroke="#e00" stroke-width=".8"/></symbol>
<symbol id="candle" viewBox="0 0 16 16"><path d="M4 0v14M2 3h4v7H2z" fill="#fff" stroke="#000"/><path d="M11.500 2v14M9.500 5h4v8h-4z" fill="#e01020" stroke="#e01020"/></symbol>
<symbol id="tmpl" viewBox="0 0 16 16"><path d="M2 4l4-3h9v10l-4 4H2z" fill="#ee0" stroke="#000"/><path d="M5 5h8v8H5z" fill="#fff" stroke="#000"/><path d="M7 7v4h4M8 9h3" stroke="#000" fill="none"/></symbol>
<symbol id="c3d" viewBox="0 0 16 16"><path d="M2 5l4-4h8v10l-4 4H2z" fill="#fff" stroke="#000"/><path d="M4 14V7l3-3v10M9 12V5l3-3v9" stroke="#22d" fill="#9af"/></symbol>
<symbol id="c3e" viewBox="0 0 16 16"><path d="M2 7l4-6h8v8l-4 6H2z" fill="#ee2" stroke="#000"/><path d="M3 12l9-4" stroke="#1c3" stroke-width="3"/><path d="M5 3h8" stroke="#e22" stroke-width="2"/><path d="M3 14h7" stroke="#22e" stroke-width="2"/></symbol>
<symbol id="c3f" viewBox="0 0 16 16"><path d="M2 5l4-4h8v10l-4 4H2z" fill="#fff" stroke="#000"/><path d="M4 9h2v2H4zM7 5h2v2H7zM10 3h2v2h-2zM8 11h2v2H8zM11 7h2v2h-2z" fill="#22e"/></symbol>
<symbol id="cont" viewBox="0 0 16 16"><path d="M0 0h16v16H0z" fill="#2d3"/><path d="M2 2h3v3H2zM10 1h3v3h-3zM3 10h3v3H3zM11 9h3v3h-3z" fill="#e22"/><path d="M7 0v16M0 7h16" stroke="#cf0" stroke-width="1.500"/></symbol>
<symbol id="img" viewBox="0 0 16 16"><path d="M1 1h14v14H1z" fill="#bbc" stroke="#889"/><path d="M4 4h5l3 3-3 4-4-2z" fill="#889"/></symbol>
<symbol id="prof" viewBox="0 0 16 16"><path d="M1 6l3-3 3 2 4-4 4 3" fill="none" stroke="#889"/><path d="M1 8h14v7H1z" fill="#aab" stroke="#778"/></symbol>
<symbol id="face" viewBox="0 0 16 16"><path d="M2 1l2 2h8l2-2v9l-3 2H5l-3-2z" fill="#dde" stroke="#778"/><path d="M5 5h1v1H5zM10 5h1v1h-1zM6 8h4l-2 2z" stroke="#556" fill="#556"/><path d="M0 14h16" stroke="#889" stroke-width="4" stroke-dasharray="3 1"/></symbol>
<symbol id="facex" viewBox="0 0 16 16"><path d="M2 1l2 2h8l2-2v9l-3 2H5l-3-2z" fill="#dde" stroke="#778"/><path d="M3 2l10 9M13 2L3 11" stroke="#667"/><path d="M0 14h16" stroke="#445" stroke-width="4" stroke-dasharray="3 1"/></symbol>
<symbol id="mask" viewBox="0 0 16 16"><path d="M2 2h12v7l-6 6-6-6z" fill="#aab" stroke="#667"/><path d="M5 5h2M9 5h2M5 9h6" stroke="#445" stroke-width="1.500"/></symbol>
<symbol id="mv" viewBox="0 0 16 16"><path d="M0 4h2v2H0zM4 4h2v2H4zM8 4h2v2H8zM0 9h2v2H0zM4 9h2v2H4zM8 9h2v2H8z" fill="#778"/><path d="M13.500 1v14m-2-12l2-2 2 2m-4 10l2 2 2-2" fill="none" stroke="#667" stroke-width="1.300"/></symbol>
<symbol id="mvr" viewBox="0 0 16 16"><path d="M0 3h3v3H0zM8 3h2v3H8zM0 9h3v3H0zM4 9h3v3H4zM8 9h2v3H8z"/><path d="M4 3h3v3H4z" fill="#e00"/><path d="M13.500 1v14m-2-12l2-2 2 2m-4 10l2 2 2-2" fill="none" stroke="#000" stroke-width="1.300"/></symbol>
<symbol id="book" viewBox="0 0 32 32"><path d="M3 3h29v29H3z"/><path d="M1 1h28v28H1z" fill="#fff" stroke="#000" stroke-width="2"/><path d="M2 9h26M2 14h26M2 19h26M2 24h26M10.500 2v26M20 2v26" stroke="#006" stroke-width="1.500"/><path d="M3 11.500h6M12 11.500h7M22 11.500h5M3 16.500h6M12 16.500h7M22 16.500h5M3 21.500h6M12 21.500h7M22 21.500h5M3 26.500h6M12 26.500h7M22 26.500h5" stroke="#2e3" stroke-width="3"/><path d="M4 8V5l2-2 2 2v3M4 6h4M13 3h3l1 1-1 1.500L17 7l-1 1h-3zM26 3h-3v5h3" fill="none" stroke="#e01020" stroke-width="1.500"/></symbol>
<symbol id="graph" viewBox="0 0 32 32"><path d="M3 3h29v29H3z"/><path d="M1 1h28v28H1z" fill="#fff" stroke="#000" stroke-width="2"/><path d="M5 4h21v20H5z" fill="#2ee" stroke="#e01020" stroke-width="2"/><path d="M5 13h21" stroke="#e01020" stroke-width="2"/><path d="M8 10l4-2 2-2 2 2 3-2 3 4" fill="none" stroke="#000" stroke-width="1.500"/><path d="M7 19l8-3h9" fill="none" stroke="#d0c" stroke-width="1.500"/><path d="M7 23l6-4 11-1" fill="none" stroke="#000" stroke-width="1.500"/><path d="M4 27h22" stroke="#000" stroke-width="1.500" stroke-dasharray="4 3"/></symbol>
<symbol id="bigx" viewBox="0 0 24 20"><path d="M2 1h6l4 6 4-6h6l-6 9 6 9h-6l-4-6-4 6H2l6-9z" fill="#f4f4f4" stroke="#555a68" stroke-width="1.500"/></symbol>
</defs>
</svg>

<header class="top">
<nav class="menu">
<a href="#">File</a><a href="#">Edit</a><a href="#">View</a><a href="#">Plot</a><a href="#">Column</a><a href="#">Worksheet</a><a href="#">Analysis</a><a href="#">Statistics</a><a href="#">Image</a><a href="#">Tools</a><a href="#">Format</a><a href="#">Window</a><a href="#">Help</a>
</nav>
<div class="bars">
<div class="bar"><i class="grip"></i>
<button><svg><use href="#doc"/></svg></button><button><svg><use href="#docy"/></svg></button><button><svg><use href="#docg"/></svg></button><button><svg><use href="#docx"/></svg></button><button><svg><use href="#docc"/></svg></button><button><svg><use href="#docgy"/></svg></button><button class="more wide"><svg><use href="#fn"/></svg></button><button><svg><use href="#doci"/></svg></button><button><svg><use href="#docn"/></svg></button><button><svg><use href="#docr"/></svg></button><i class="sep"></i>
<button><svg><use href="#open"/></svg></button><button><svg><use href="#openg"/></svg></button><button><svg><use href="#openx"/></svg></button><button><svg><use href="#save"/></svg></button><button><svg><use href="#saveg"/></svg></button><i class="sep"></i>
<button><svg><use href="#imp"/></svg></button><button><svg><use href="#imp1"/></svg></button><button><svg><use href="#imp1"/></svg></button><i class="sep"></i>
<button><svg><use href="#dup"/></svg></button><button><svg><use href="#run"/></svg></button><i class="sep"></i>
<label class="combo zoomc"><select aria-label="Zoom"><option>100%</option></select></label><i class="sep"></i>
<button><svg><use href="#print"/></svg></button><button><svg><use href="#pres"/></svg></button><button><svg><use href="#cam"/></svg></button><button><svg><use href="#film"/></svg></button><i class="sep"></i>
<button><svg><use href="#brush"/></svg></button><button><svg><use href="#split"/></svg></button><i class="sep"></i>
<button><svg><use href="#tree"/></svg></button><i class="sep"></i>
<button><svg><use href="#find"/></svg></button><button><svg><use href="#list"/></svg></button><button class="on"><svg><use href="#editl"/></svg></button><button><svg><use href="#gear"/></svg></button><i class="sep"></i>
<button><svg><use href="#addcol"/></svg></button><i class="end"></i></div>
<div class="bar"><i class="grip"></i>
<button><svg><use href="#sumc"/></svg></button><button><svg><use href="#sumr"/></svg></button><button><svg><use href="#sort"/></svg></button><i class="sep"></i>
<button><svg><use href="#n123"/></svg></button><button><svg><use href="#t123"/></svg></button><i class="sep"></i>
<button><svg><use href="#b1"/></svg></button><button><svg><use href="#b2"/></svg></button><button><svg><use href="#b3"/></svg></button><button><svg><use href="#filt"/></svg></button><button><svg><use href="#filtx"/></svg></button><button><svg><use href="#filtr"/></svg></button><i class="end"></i></div>
<div class="bar"><i class="grip"></i>
<button class="ltr">X</button><button class="ltr on">Y</button><button class="ltr">Z</button><button><svg><use href="#ibeam"/></svg></button><button class="tiny">abc<br>■</button><button class="tiny">NONE</button><i class="sep"></i>
<button class="ltr sm">G</button><button class="ltr sm">S</button><i class="sep"></i>
<button><svg><use href="#first"/></svg></button><button><svg><use href="#prev"/></svg></button><button class="dim"><svg><use href="#next"/></svg></button><button class="dim"><svg><use href="#last"/></svg></button><i class="end"></i></div>
</div>
<div class="bars">
<div class="bar"><i class="grip"></i>
<label class="combo fontc"><span class="tt">T<b>T</b></span><select aria-label="Font"><option>Default: Arial</option></select></label>
<label class="combo sizec"><select aria-label="Size"><option>9</option></select></label>
<span class="fmt"><button><b>B</b></button><button><b><em>I</em></b></button><button><b><u>U</u></b></button><button class="dim">x<sup>2</sup></button><button class="dim">x<sub>2</sub></button><button class="dim">x<sup>2</sup></button><button class="dim">αβ</button><button class="dim big">A</button><button class="dim">A</button></span>
<button class="more"><svg><use href="#al"/></svg></button><button class="more wide"><svg><use href="#vl"/></svg></button><button class="acol drop">A</button><i class="end"></i></div>
<div class="bar"><i class="grip"></i>
<button class="drop"><svg><use href="#bucket"/></svg></button><button class="drop"><svg><use href="#pal"/></svg></button><button class="drop"><svg><use href="#pen"/></svg></button><button><svg><use href="#bulb"/></svg></button>
<label class="combo linec"><span class="stroke"></span><select aria-label="Line style"><option></option></select></label>
<label class="combo widc"><select aria-label="Line width"><option>0.5</option></select></label>
<label class="combo off"><span class="swatch"></span><select aria-label="Fill" disabled><option></option></select></label>
<label class="combo off"><select aria-label="Pattern size" disabled><option>0</option></select></label>
<button class="drop"><svg><use href="#hatch"/></svg></button><button class="more"><svg><use href="#dots"/></svg></button><button class="wide"><svg><use href="#cellb"/></svg></button><i class="end"></i></div>
<div class="bar"><i class="grip"></i>
<button><svg><use href="#mm"/></svg></button><button><svg><use href="#mx"/></svg></button><i class="sep"></i><button><svg><use href="#pm"/></svg></button><button><svg><use href="#pm3"/></svg></button><i class="sep"></i><button><svg><use href="#lock"/></svg></button><i class="end"></i></div>
<div class="bar"><i class="grip"></i>
<button><svg><use href="#db"/></svg></button><button><svg><use href="#dby"/></svg></button><button><svg><use href="#dbo"/></svg></button><button><svg><use href="#dbg"/></svg></button><button><svg><use href="#dbg"/></svg></button><button><svg><use href="#dbx"/></svg></button><i class="end"></i></div>
<div class="bar"><i class="grip"></i>
<button><svg><use href="#cut"/></svg></button><button><svg><use href="#copy"/></svg></button><button><svg><use href="#paste"/></svg></button><i class="end"></i></div>
</div>
</header>

<div class="mid">
<aside class="docks">
<button class="t1">Project Explorer (1)</button><button class="t2">Quick Help</button><button class="t3">Messages Log</button>
</aside>
<aside class="vcol left">
<div class="bar v"><i class="grip"></i>
<button class="on"><svg><use href="#cursor"/></svg></button><button><svg><use href="#zin"/></svg></button><button><svg><use href="#zout"/></svg></button><button><svg><use href="#cross"/></svg></button><button class="more"><svg><use href="#target"/></svg></button><button><svg><use href="#arrs"/></svg></button><button class="more"><svg><use href="#oval"/></svg></button><button class="more"><svg><use href="#maskg"/></svg></button><button><svg><use href="#dotc"/></svg></button><button class="tool-t">T</button><button class="more"><svg><use href="#arrow"/></svg></button><button class="more"><svg><use href="#line"/></svg></button><button class="more"><svg><use href="#rect"/></svg></button><button><svg><use href="#hand"/></svg></button><button class="more"><svg><use href="#sq"/></svg></button><button class="more"><svg><use href="#docc"/></svg></button><button><svg><use href="#handg"/></svg></button><button><svg><use href="#cube"/></svg></button><i class="end"></i></div>
</aside>

<main class="desk">
<section class="win book">
<div class="wtitle"><svg><use href="#book"/></svg><span>Book3</span></div>
<div class="sheet">
<div class="clip">
<table>
<colgroup><col class="c0"><col><col><col><col></colgroup>
<thead><tr><th></th><th>A(X)</th><th class="cur">B(Y)</th><th class="sel">C(Y)</th><th class="sel">D(Y)</th></tr></thead>
<tbody class="lab">
<tr><th>Long Name</th><td></td><td></td><td></td><td></td></tr>
<tr><th>Units</th><td></td><td></td><td></td><td></td></tr>
<tr><th>Comments</th><td></td><td></td><td></td><td></td></tr>
</tbody>
<tbody>
<tr><th>1</th><td>1</td><td>10</td><td>5</td><td>2</td></tr>
<tr><th>2</th><td>2</td><td>25</td><td>20</td><td>17</td></tr>
<tr><th>3</th><td>3</td><td>50</td><td>45</td><td>42</td></tr>
<tr><th>4</th><td>4</td><td>80</td><td>75</td><td>72</td></tr>
<tr><th>5</th><td>5</td><td>90</td><td>85</td><td>82</td></tr>
<tr><th>6</th><td>6</td><td>99</td><td>94</td><td>91</td></tr>
<tr><th>7</th><td></td><td></td><td></td><td></td></tr>
<tr><th>8</th><td></td><td></td><td></td><td></td></tr>
<tr><th>9</th><td></td><td></td><td></td><td></td></tr>
<tr><th>10</th><td></td><td></td><td></td><td></td></tr>
<tr><th>11</th><td></td><td></td><td></td><td></td></tr>
<tr><th>12</th><td></td><td></td><td></td><td></td></tr>
<tr><th>13</th><td></td><td></td><td></td><td></td></tr>
<tr><th>14</th><td></td><td></td><td></td><td></td></tr>
<tr><th>15</th><td></td><td></td><td></td><td></td></tr>
<tr><th>16</th><td></td><td></td><td></td><td></td></tr>
<tr><th>17</th><td></td><td></td><td></td><td></td></tr>
<tr><th>18</th><td></td><td></td><td></td><td></td></tr>
</tbody>
</table>
</div>
<div class="tabs"><button class="nav" aria-label="Previous sheet"><i class="tl"></i></button><button class="nav" aria-label="Next sheet"><i class="tr"></i></button><button class="tab"><svg viewBox="0 0 124 34" preserveAspectRatio="none"><path d="M1 0L8 33.500H117L123 0z" fill="#fff"/><path d="M1 0L8 33M117 33L123 0" stroke="#000" stroke-width="2" fill="none"/></svg><span>Sheet1</span></button></div>
</div>
</section>

<div class="minis">
<div class="mini"><svg class="mi"><use href="#graph"/></svg><button class="mc" aria-label="Restore"><i></i></button><button class="mc" aria-label="Close"><svg><use href="#bigx"/></svg></button></div>
<div class="mini"><svg class="mi"><use href="#book"/></svg><button class="mc" aria-label="Restore"><i></i></button><button class="mc" aria-label="Close"><svg><use href="#bigx"/></svg></button></div>
<div class="mini"><svg class="mi"><use href="#book"/></svg><button class="mc" aria-label="Restore"><i></i></button><button class="mc" aria-label="Close"><svg><use href="#bigx"/></svg></button></div>
</div>

<section class="dlg" role="dialog" aria-labelledby="dt">
<div class="dtitle"><h1 id="dt">Statistics on Rows</h1><button class="help">?</button><button class="close" aria-label="Close"><svg viewBox="0 0 20 20"><path d="M1 1l18 18M19 1L1 19" stroke="#000" stroke-width="1.500"/></svg></button></div>
<div class="dbody">
<div class="theme"><label for="th">Dialog Theme</label><input id="th" type="text" readonly><button class="tbtn" aria-label="Theme menu"><i class="tr"></i></button></div>
<div class="desc"><label for="de">Description</label><input id="de" type="text" value="Perform Descriptive Statistics" readonly></div>
<div class="panel">
<div class="scroll">
<div class="row recalc"><label for="rc" class="b">Recalculate</label><span class="pick"><select id="rc"><option>Manual</option></select><svg viewBox="0 0 14 8"><path d="M1 1l6 6 6-6" fill="none" stroke="#444" stroke-width="1.500"/></svg></span></div>
<div class="row head gapt"><button class="ex">−</button><span class="b">Input Data</span><hr></div>
<div class="row sub"><button class="ex">−</button><span>Range 1</span></div>
<div class="row item range"><label for="dr">Data Range</label><span class="rin"><input id="dr" type="text" value="[Book3]Sheet1!B:D"><button aria-label="Select range"><svg viewBox="0 0 16 18"><path d="M0 0h16v18H0z" fill="#fff"/><path d="M1 1h6v3H1z" fill="#00a"/><path d="M1 7h14M1 10h14M1 13h14M9 1h6" stroke="#aaa"/><path d="M6 5l6 1-2 2 3 3-2 1-3-3-2 1z" fill="#e00"/><path d="M9 13h6v4H9z"/></svg></button><button class="gr" aria-label="Range menu"><i class="tr"></i></button></span></div>
<div class="row head gapt low"><button class="ex">−</button><span class="b">Quantities to Compute</span><hr></div>
<div class="row sub mom"><button class="ex">−</button><label for="mo">Moments</label><span class="all"><input id="mo" type="checkbox"></span></div>
<div class="row item"><label for="k1">N total</label><input id="k1" type="checkbox"></div>
<div class="row item"><label for="k2">N missing</label><input id="k2" type="checkbox"></div>
<div class="row item"><label for="k3">Mean</label><input id="k3" type="checkbox" checked></div>
<div class="row item"><label for="k4">Standard Deviation</label><input id="k4" type="checkbox" checked></div>
<div class="row item"><label for="k5">SE of mean</label><input id="k5" type="checkbox"></div>
<div class="row item"><label for="k6">Lower 95% CI of Mean</label><input id="k6" type="checkbox"></div>
<div class="row item"><label for="k7">Upper 95% CI of Mean</label><input id="k7" type="checkbox"></div>
<div class="row item"><label for="k8">Variance</label><input id="k8" type="checkbox"></div>
<div class="row item"><label for="k9">Sum</label><input id="k9" type="checkbox"></div>
<div class="row item"><label for="k10">Skewness</label><input id="k10" type="checkbox"></div>
<div class="row item"><label for="k11">Kurtosis</label><input id="k11" type="checkbox"></div>
<div class="row item"><label for="k12">Uncorrected Sum of Squares</label><input id="k12" type="checkbox"></div>
<div class="row item"><label for="k13">Corrected Sum of Squares</label><input id="k13" type="checkbox"></div>
<div class="row item"><label for="k14">Coefficient of Variation</label><input id="k14" type="checkbox"></div>
<div class="row item"><label for="k15">Mean absolute Deviation</label><input id="k15" type="checkbox"></div>
<div class="row item"><label for="k16">SD times 2</label><input id="k16" type="checkbox"></div>
<div class="row item"><label for="k17">SD times 3</label><input id="k17" type="checkbox"></div>
<div class="row item"><label for="k18">Geometric Mean</label><input id="k18" type="checkbox"></div>
<div class="row item"><label for="k19">Geometric SD</label><input id="k19" type="checkbox"></div>
<div class="row item"><label for="k20">Mode</label><input id="k20" type="checkbox"></div>
<div class="row sub"><button class="ex">+</button><span>Quantiles</span></div>
<div class="row head"><button class="ex">+</button><span class="b">Computation Control</span></div>
<div class="row head"><button class="ex">+</button><span class="b">Output Settings</span></div>
</div>
<div class="vs"><svg viewBox="0 0 14 10"><path d="M2 9l5-7 5 7" fill="none" stroke="#555" stroke-width="2"/></svg><i></i><svg viewBox="0 0 14 10"><path d="M2 1l5 7 5-7" fill="none" stroke="#555" stroke-width="2"/></svg></div>
<div class="hs"><svg viewBox="0 0 10 14"><path d="M9 2L3 7l6 5" fill="none" stroke="#555" stroke-width="2"/></svg><i></i><svg viewBox="0 0 10 14"><path d="M1 2l6 5-6 5" fill="none" stroke="#555" stroke-width="2"/></svg></div>
</div>
<div class="acts"><button class="ok">OK</button><button>Cancel</button></div>
</div>
<i class="mark m1"></i><i class="mark m2"></i><i class="mark m3"></i><i class="mark m4"></i>
<p class="note n1">1.<span lang="zh">展开</span>Moments</p><p class="note n2">2.<span lang="zh">勾选</span>Mean, Standard Deviation</p><p class="note n3">3. <span lang="zh">单击</span></p>
</section>
</main>

<aside class="vcol right">
<div class="bar v"><i class="grip"></i>
<button><svg><use href="#scat"/></svg></button><i class="sep"></i><button><svg><use href="#lay1"/></svg></button><button><svg><use href="#lay4"/></svg></button><button><svg><use href="#lay4"/></svg></button><i class="sep"></i><button><svg><use href="#ax1"/></svg></button><button><svg><use href="#ax2"/></svg></button><button><svg><use href="#ax3"/></svg></button><button><svg><use href="#ax4"/></svg></button><button><svg><use href="#ax5"/></svg></button><button><svg><use href="#ax5"/></svg></button><i class="sep"></i><button><svg><use href="#lines"/></svg></button><button><svg><use href="#leg"/></svg></button><button><svg><use href="#leg2"/></svg></button><button><svg><use href="#clock"/></svg></button><button><svg><use href="#grid"/></svg></button><i class="end"></i></div>
<div class="bar v"><i class="grip"></i>
<button><svg><use href="#all"/></svg></button><button><svg><use href="#alr"/></svg></button><i class="sep"></i><button><svg><use href="#alt"/></svg></button><button><svg><use href="#alb"/></svg></button><i class="sep"></i><button><svg><use href="#alc"/></svg></button><button><svg><use href="#alm"/></svg></button><i class="sep"></i><button><svg><use href="#dsh"/></svg></button><button><svg><use href="#dsv"/></svg></button><i class="sep"></i><button><svg><use href="#front"/></svg></button><button><svg><use href="#back"/></svg></button><i class="sep"></i><button><svg><use href="#fade"/></svg></button><button><svg><use href="#fade"/></svg></button><i class="sep"></i><button><svg><use href="#grp"/></svg></button><button><svg><use href="#grp"/></svg></button><i class="end"></i></div>
</aside>
</div>

<footer class="foot bars">
<div class="bar plots tight"><i class="grip"></i>
<button class="more"><svg><use href="#line"/></svg></button><button class="more"><svg><use href="#pd"/></svg></button><button class="more"><svg><use href="#pl"/></svg></button><button class="more"><svg><use href="#pb"/></svg></button><button class="more"><svg><use href="#pm2"/></svg></button><button class="more"><svg><use href="#box"/></svg></button><button class="more"><svg><use href="#area"/></svg></button><button class="more"><svg><use href="#radar"/></svg></button><button class="more"><svg><use href="#candle"/></svg></button><button><svg><use href="#tmpl"/></svg></button><i class="end"></i></div>
<div class="bar plots"><i class="grip"></i>
<button class="more"><svg><use href="#c3d"/></svg></button><i class="sep"></i><button class="more"><svg><use href="#c3e"/></svg></button><button class="more"><svg><use href="#c3f"/></svg></button><button class="more"><svg><use href="#cont"/></svg></button><button class="nar"><svg><use href="#img"/></svg></button><button class="nar"><svg><use href="#prof"/></svg></button><i class="end"></i></div>
<div class="bar apart"><i class="grip"></i>
<button><svg><use href="#face"/></svg></button><button><svg><use href="#facex"/></svg></button><i class="sep"></i><button><svg><use href="#mask"/></svg></button><button><svg><use href="#mv"/></svg></button><button><svg><use href="#mv"/></svg></button><i class="sep"></i><button><svg><use href="#mvr"/></svg></button><i class="end"></i></div>
</footer>
</body>
</html>
```
FILE: styles.css
```css
* { box-sizing: border-box; }
html, body { height: 100%; }
body {
  margin: 0;
  display: flex;
  flex-direction: column;
  overflow: hidden;
  background: #ebedfb;
  color: #000;
  font: 19px/24px "Liberation Sans", Arial, sans-serif;
}
button {
  margin: 0;
  padding: 0;
  border: 0;
  background: none;
  color: inherit;
  font: inherit;
}
.sprite { position: absolute; width: 0; height: 0; }

/* Menu */
.top { border-top: 3px solid #fff; }
.menu {
  display: flex;
  gap: 18px;
  height: 40px;
  padding: 2px 0 0 17px;
  align-items: center;
  font: 21px/28px "Open Sans", "Noto Sans", sans-serif;
}
.menu a { color: #000; text-decoration: none; }

/* Toolbars */
.bars { display: flex; height: 43px; }
.bar {
  display: flex;
  align-items: center;
  height: 42px;
  padding-left: 2px;
  border-bottom: 1px solid #9a9ab4;
  border-radius: 4px;
  background: linear-gradient(#f7faff 0%, #eef1fa 35%, #cdcfe0 70%, #b2b2ca 100%);
}
.bar button {
  position: relative;
  display: flex;
  align-items: center;
  justify-content: center;
  flex: none;
  width: 22px;
  height: 36px;
}
.bar svg { width: 16px; height: 16px; }
.bar .wide { width: 26px; }
.bar .on { background: #d9eafb; border: 1px solid #3a96ec; }
.bar .dim { color: #74788c; }
.grip {
  width: 2px;
  height: 30px;
  margin: 0 4px 0 2px;
  background: repeating-linear-gradient(#9a9aa6 0 2px, transparent 2px 4px);
}
.sep { width: 1px; height: 32px; margin: 0 3px 0 4px; background: #b9bac2; }
.end {
  position: relative;
  align-self: stretch;
  width: 13px;
  border-radius: 0 4px 4px 0;
  background: linear-gradient(#b4b4ca, #d0d1e2 60%, #f2f3fc);
}
.end::after, .drop::after {
  content: "";
  position: absolute;
  right: 3px;
  bottom: 3px;
  border: 3px solid transparent;
  border-top: 4px solid #000;
  border-bottom: 0;
}
.end::before {
  content: "";
  position: absolute;
  right: 3px;
  bottom: 8px;
  width: 6px;
  height: 1px;
  background: #000;
}
.more::after {
  content: "";
  position: absolute;
  right: 0;
  bottom: 1px;
  border: 2px solid #666;
  border-left-color: transparent;
  border-top-color: transparent;
}
.bar .drop { width: 35px; padding-right: 14px; }
.drop::after { right: 2px; bottom: 15px; border-width: 3px; }
.bar .ltr { font-size: 18px; }
.bar .sm { font-size: 16px; }
.bar .tiny { width: 23px; flex-direction: column; font: 9px/9px "Liberation Mono", monospace; }
.fmt { display: flex; padding-left: 4px; font: 18px/22px "Liberation Serif", serif; }
.fmt .big { font-size: 22px; }
.fmt sup { font-size: 10px; align-self: flex-start; }
.fmt sub { font-size: 10px; align-self: flex-end; }
.bar .acol { margin-left: 4px; font: bold 19px/22px "Liberation Serif", serif; color: #0a0a60; }
.acol::before {
  content: "";
  position: absolute;
  left: 2px;
  bottom: 7px;
  width: 16px;
  height: 4px;
  background: #000;
}
.combo {
  position: relative;
  display: flex;
  align-items: center;
  flex: none;
  width: 56px;
  height: 35px;
  margin-right: 6px;
  padding-right: 13px;
  background: #fff;
  border: 1px solid #fff;
  font: 21px/30px "Open Sans", "Noto Sans", sans-serif;
}
.combo::before {
  content: "";
  position: absolute;
  right: 0;
  top: 0;
  bottom: 0;
  width: 13px;
  background: linear-gradient(#e9ebf5, #bcbdd2);
}
.combo::after {
  content: "";
  position: absolute;
  right: 3px;
  top: 15px;
  border: 3px solid transparent;
  border-top: 4px solid #000;
  border-bottom: 0;
}
.combo select {
  appearance: none;
  width: 100%;
  min-width: 0;
  padding: 0 2px;
  border: 0;
  background: none;
  color: #000;
  font: inherit;
  text-overflow: clip;
}
.zoomc { width: 57px; margin: 0 3px 0 2px; }
.fontc { width: 125px; margin-left: 2px; }
.sizec { margin-right: 0; }
.off { width: 57px; margin-right: 4px; border: 1px solid #a0a0a8; background: #efefef; }
.off::before { background: #efefef; }
.off::after { border-top-color: #888; }
.off select { color: #777; opacity: 1; }
.tt { width: 38px; flex: none; padding-left: 6px; font: bold 24px/26px "Liberation Serif", serif; color: #777; white-space: nowrap; }
.tt b { position: relative; left: -8px; top: 5px; color: #000; }
.stroke { flex: none; width: 32px; height: 2px; margin-left: 4px; background: #000; }
.swatch { flex: none; width: 33px; height: 26px; margin-left: 3px; border: 1px solid #000; background: #fff; }
.linec select, .off .swatch + select { width: 4px; }

/* Middle band */
.mid { flex: 1; display: flex; min-height: 0; }
.docks { display: flex; flex-direction: column; gap: 14px; width: 31px; }
.docks button {
  writing-mode: vertical-rl;
  width: 31px;
  padding-right: 4px;
  border: 1px solid #d4d4da;
  border-left: 0;
  background: #f0f0f0;
  color: #555;
  font: 20px/26px "Liberation Mono", monospace;
  text-align: left;
  white-space: nowrap;
}
.docks .t1 { height: 271px; }
.docks .t2 { height: 150px; }
.docks .t3 { height: 172px; }
.vcol { display: flex; flex-direction: column; }
.left { width: 33px; padding-left: 2px; }
.right { width: 27px; border-left: 2px solid #f4f4f8; }
.v {
  flex-direction: column;
  width: 100%;
  height: auto;
  padding: 2px 0 0;
  border-bottom: 0;
  border-right: 1px solid #9a9ab4;
  background: linear-gradient(90deg, #f7faff 0%, #eef1fa 35%, #cdcfe0 70%, #b2b2ca 100%);
}
.bar.v button { width: 24px; height: 30px; }
.v .grip {
  width: 18px;
  height: 2px;
  margin: 2px 0 4px;
  background: repeating-linear-gradient(90deg, #9a9aa6 0 2px, transparent 2px 4px);
}
.v .sep { width: 20px; height: 1px; margin: 4px 0 3px; }
.v .end { width: auto; height: 12px; }
.v .end::after {
  right: 3px;
  bottom: 2px;
  border: 4px solid transparent;
  border-left: 4px solid #000;
  border-right: 0;
}
.v .end::before { right: 9px; bottom: 3px; width: 2px; height: 6px; }
.left .v button { margin-right: 5px; }
.bar .tool-t { font: bold 20px/24px "Liberation Serif", serif; }

/* Desktop */
.desk {
  position: relative;
  flex: 1;
  overflow: hidden;
  border: 2px solid #696969;
  border-right: 1px solid #fff;
  border-bottom: 1px solid #fff;
  background: #ababab;
}
.win { position: absolute; }
.book {
  left: 288px;
  top: 131px;
  width: 900px;
  padding: 0 11px 13px;
  border: 1px solid #444;
  border-radius: 6px 6px 0 0;
  background: linear-gradient(#bccad9 0, #c4d1df 45px, #d7e4f1 58px, #d7e4f1 100%);
  box-shadow: inset 1px 1px #fff;
}
.wtitle { display: flex; align-items: center; gap: 5px; height: 57px; padding: 10px 0 0 2px; }
.wtitle svg { width: 32px; height: 32px; }
.wtitle span { margin-top: 2px; font: 23px/30px "Open Sans", "Noto Sans", sans-serif; color: #999; }
.sheet { border: 1px solid #777; border-bottom: 2px solid #fff; background: #e0dfe4; }
.clip { height: 714px; overflow: hidden; border-bottom: 2px solid #000; }
table { width: 710px; table-layout: fixed; border-collapse: separate; border-spacing: 0; font-size: 24px; line-height: 28px; }
col { width: 134px; }
.c0 { width: 174px; }
th, td { padding: 0 6px 3px 0; height: 32px; text-align: right; font-weight: 400; }
td { padding-right: 7px; }
th { background: #b5bad3; border-right: 2px solid #000; border-bottom: 1px solid #000; }
td { background: #000; color: #fff; border-right: 1px solid #444; border-bottom: 1px solid #444; }
td:nth-child(2) { padding-right: 5px; background: #fff; color: #000; border-color: #bbb; border-right: 3px solid #222; }
td:nth-child(3) { border-left: 1px solid #fff; }
td:last-child { border-right: 1px solid #fff; }
.lab td { background: #050535; }
.lab td:nth-child(2) { background: #f9f9c8; }
.lab tr:first-child td:nth-child(n+3) { border-top: 1px solid #fff; }
thead th { height: 48px; padding: 0; text-align: center; background: #e0dfe4; }
thead th + th { border-right: 1px solid #222; }
thead .cur { font-weight: 700; border: 2px solid #222; }
thead .sel { background: #1f1f1b; color: #fff; border-right: 1px solid #fff; }
.tabs { display: flex; height: 34px; background: #c8c8c8; }
.nav {
  display: flex;
  align-items: center;
  justify-content: center;
  width: 34px;
  border: 1px solid #fff;
  border-right: 2px solid #888;
  border-bottom: 2px solid #000;
  background: #f0f0f0;
}
.tl, .tr { border: 5px solid transparent; border-right: 5px solid #555; border-left: 0; }
.tr { border-left: 5px solid #222; border-right: 0; }
.tab { position: relative; width: 124px; margin-left: 2px; }
.tab svg { position: absolute; inset: 0; width: 100%; height: 100%; }
.tab span { position: relative; font: 28px/32px "Liberation Mono", monospace; }

.minis { position: absolute; left: 0; bottom: 0; display: flex; }
.mini {
  position: relative;
  display: flex;
  gap: 2px;
  width: 160px;
  height: 50px;
  padding: 5px 4px 5px 16px;
  border: 1px solid #444;
  border-bottom-width: 2px;
  border-radius: 6px 6px 0 0;
  background: linear-gradient(#bccad9, #d7e4f1);
  box-shadow: inset 1px 1px #fff;
}
.mi { position: absolute; left: 3px; top: 8px; width: 32px; height: 32px; }
.mc {
  flex: 1;
  display: flex;
  align-items: center;
  justify-content: center;
  border: 1px solid #8796ab;
  border-radius: 2px;
}
.mc i {
  width: 10px;
  height: 6px;
  border: 1px solid #555a68;
  background: #c4d1df;
  box-shadow: 0 0 0 5px #f4f4f4, 0 0 0 6px #555a68;
}
.mc svg { width: 24px; height: 20px; }

/* Dialog */
.dlg {
  position: absolute;
  left: 1054px;
  top: 27px;
  width: 870px;
  border: 2px solid #111;
  background: #f0f0f0;
  box-shadow: 0 8px 40px rgba(0, 0, 0, .45);
}
.dtitle { display: flex; align-items: center; height: 46px; padding: 0 37px 0 2px; background: #fff; }
h1 { flex: 1; margin: 0; font: 24px/30px "Open Sans", "Noto Sans", sans-serif; }
.help { width: 30px; margin-right: 66px; font: 24px/30px "Open Sans", "Noto Sans", sans-serif; }
.close { display: flex; }
.close svg { width: 20px; height: 20px; }
.dbody { padding: 13px 13px 2px 12px; }
.theme { display: flex; gap: 14px; height: 43px; }
.theme label { width: 134px; padding: 1px 0 0 1px; }
.theme input {
  flex: 1;
  height: 38px;
  border: 1px solid #b8b8b8;
  border-bottom: 4px double #8a8d98;
  background: #f0f0f0;
  outline: 0;
  box-shadow: inset 0 1px #fff;
}
.tbtn {
  width: 42px;
  display: flex;
  align-items: center;
  justify-content: center;
  border: 1px solid #fff;
  border-right: 2px solid #777;
  border-bottom: 2px solid #777;
}
.desc { display: flex; height: 31px; margin: 14px 0 20px; }
.desc label { width: 130px; padding: 1px 0 0 1px; }
.desc input {
  flex: 1;
  padding: 0 0 2px;
  border: 1px solid #a0a0a0;
  border-right-color: #fff;
  border-bottom-color: #fff;
  background: #f0f0f0;
  font: inherit;
}
.panel {
  display: grid;
  grid-template-columns: 1fr 33px;
  grid-template-rows: 925px 33px;
  border: 1px solid #666;
}
.scroll { overflow: hidden; padding: 0 13px 0 7px; border-right: 1px solid #fff; border-bottom: 1px solid #fff; }
.row { display: flex; align-items: center; height: 31px; }
.b { font-weight: 700; }
.recalc { height: 56px; padding: 8px 0 0 1px; border-bottom: 1px solid #a0a0a0; box-shadow: 0 1px #fff; }
.recalc label { width: 317px; }
.pick { position: relative; }
.pick select {
  appearance: none;
  width: 140px;
  height: 33px;
  padding: 0 4px;
  border: 1px solid #adadad;
  border-radius: 0;
  background: #e1e1e1;
  color: #000;
  font: inherit;
}
.pick svg { position: absolute; right: 9px; top: 13px; width: 14px; height: 8px; }
.gapt { margin-top: 5px; }
.low { height: 30px; }
.mom { height: 30px; }
.head { gap: 10px; }
.sub { padding-left: 28px; gap: 10px; }
.ex {
  width: 12px;
  height: 12px;
  border: 1px solid #333;
  font: 12px/9px "Liberation Sans", Arial, sans-serif;
}
hr { flex: 1; height: 2px; margin: 0 0 2px -4px; border: 0; border-top: 1px solid #a0a0a0; background: #fff; }
.item { padding-left: 57px; }
.item label { width: 262px; }
.range { height: 40px; }
.rin { flex: 1; display: flex; align-items: flex-start; }
.rin input {
  flex: 1;
  min-width: 0;
  height: 39px;
  padding: 0 1px;
  border: 3px double #777;
  background: #fff;
  font: 22px/28px "Liberation Sans", Arial, sans-serif;
}
.rin button {
  display: flex;
  align-items: center;
  justify-content: center;
  width: 18px;
  height: 20px;
  border: 1px solid #000;
}
.rin .gr { background: #b8b8b8; }
.rin svg { width: 16px; height: 18px; }
input[type=checkbox] {
  appearance: none;
  width: 23px;
  height: 22px;
  margin: 0;
  border: 2px solid #333;
  background: #fff;
}
input[type=checkbox]:checked {
  background: #fff url("data:image/svg+xml,%3Csvg xmlns='http://www.w3.org/2000/svg' viewBox='0 0 19 18'%3E%3Cpath d='M3 9l5 5 9-11' fill='none' stroke='%23333' stroke-width='1.500'/%3E%3C/svg%3E") center / 19px 18px no-repeat;
}
.mom label { width: 260px; }
.all {
  display: flex;
  align-items: center;
  justify-content: center;
  width: 25px;
  height: 18px;
  margin: -14px 0 0;
  border: 1px solid #fff;
  border-right: 2px solid #888;
  border-bottom: 2px solid #888;
}
.all input[type=checkbox] { width: 11px; height: 11px; border: 1px solid #777; border-right-color: #ddd; border-bottom-color: #ddd; }
.vs { display: flex; flex-direction: column; align-items: center; }
.vs svg { width: 14px; height: 10px; margin: 12px 0; }
.vs i { width: 32px; height: 806px; background: #cdcdcd; }
.vs svg:last-child { margin-top: 62px; }
.hs { display: flex; align-items: center; }
.hs svg { width: 10px; height: 14px; margin: 0 12px; }
.hs i { flex: 1; height: 32px; background: #cdcdcd; }
.acts { display: flex; justify-content: flex-end; gap: 16px; padding-top: 26px; }
.acts button { width: 124px; height: 42px; border: 1px solid #adadad; background: #e1e1e1; }
.acts .ok { border: 2px solid #1177d8; }

/* Tutorial marks over the dialog */
.mark { position: absolute; border: 4px solid #ff2d1a; box-shadow: 0 3px 4px rgba(0, 0, 0, .3), inset 0 3px 4px rgba(0, 0, 0, .25); }
.m1 { left: -4px; top: -6px; width: 249px; height: 63px; }
.m2 { left: 28px; top: 346px; width: 249px; height: 63px; }
.m3 { left: 59px; top: 454px; width: 344px; height: 64px; }
.m4 { left: 572px; top: 1138px; width: 151px; height: 65px; }
.note {
  position: absolute;
  margin: 0;
  color: #ff2d1a;
  font: 500 38px/44px Inter, "Noto Sans CJK SC", sans-serif;
  white-space: nowrap;
}
.note span { font-size: 34px; }
.n1 { left: 366px; top: 346px; }
.n2 { left: 236px; top: 548px; }
.n3 { left: 591px; top: 1022px; }

/* Bottom toolbars */
.foot { height: 43px; padding: 1px 0 0 65px; border-top: 1px solid #fff; border-bottom: 1px solid #d4d5e0; }
.foot .bar { height: 40px; }
.bar.plots button { width: 26px; }
.bar.plots .nar { width: 24px; }
.foot .tight { padding-left: 0; }
.tight .grip { margin-right: 2px; }
.apart { margin-left: 53px; }
```
